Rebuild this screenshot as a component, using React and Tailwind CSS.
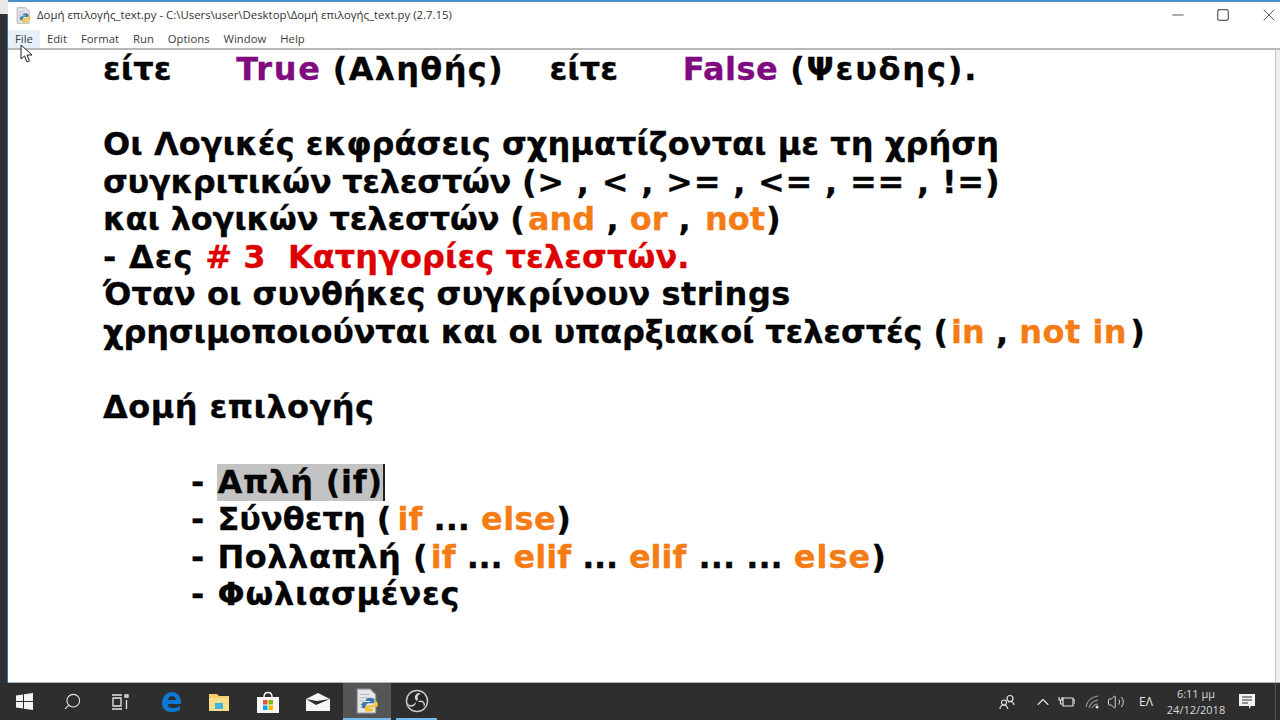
import React from 'react';
import { Search, ChevronUp, Volume2, X, Minus, Square } from 'lucide-react';

const O = ({ children, className = '' }) => <span className={'text-[#f57c14] ' + className}>{children}</span>;
const P = ({ children, className = '' }) => <span className={'text-[#800a80] ' + className}>{children}</span>;

function IdleIcon({ size = 18 }) {
  return (
    <svg width={size} height={size} viewBox="0 0 24 24">
      <path d="M3 1h12l5 5v17H3z" fill="#e6e8ea" stroke="#9a9ea3" strokeWidth="1" />
      <path d="M5 6h9M5 9h8M5 12h5M5 15h4M5 18h4" stroke="#b5b8bc" strokeWidth="1" />
      <path d="M8 14c0-2 1-3 3-3h4c1 0 1-1 1-2V8c0-1-1-2-4-2s-4 1-4 2v1h4v1H7c-2 0-3 1-3 3s1 3 3 3h1z" fill="#3a77b0" transform="translate(3 3)" />
      <path d="M16 10c2 0 3 1 3 3s-1 3-3 3h-5v1h4v1c0 1-1 2-4 2s-4-1-4-2v-1c0-2 1-3 3-3h4c1 0 2-1 2-2z" fill="#f2c53c" transform="translate(3 2)" />
    </svg>
  );
}

function MenuBar() {
  const items = ['File', 'Edit', 'Format', 'Run', 'Options', 'Window', 'Help'];
  return (
    <div className="h-[18px] flex items-center text-[11.300px] text-[#3c3c3c] shrink-0">
      {items.map((m, i) => (
        <span key={m} className={i === 0 ? 'h-full flex items-center px-[7px] bg-[#e5f0fa]' : 'h-full flex items-center px-[7px]'}>{m}</span>
      ))}
    </div>
  );
}

function Line({ children, indent }) {
  return <div className={indent ? 'h-[37.500px] whitespace-pre pl-[88px]' : 'h-[37.500px] whitespace-pre'}>{children}</div>;
}

function Editor() {
  return (
    <div className="flex-1 bg-white overflow-hidden pl-[95px] pt-[1px] font-['DejaVu_Sans'] font-bold text-[32px] leading-[37.500px] text-[#050505] [-webkit-text-stroke:0.3px]">
      <Line>
        είτε     <P className="ml-[9px] tracking-[1.700px] [-webkit-text-stroke:0.3px_#800a80]">True</P> <span className="tracking-[1.300px]">(Αληθής)</span>    <span className="ml-[1px]">είτε</span>     <P className="ml-[9px] tracking-[0.400px] [-webkit-text-stroke:0.3px_#800a80]">False</P> <span className="ml-[1px] tracking-[1.800px]">(Ψευδης).</span>
      </Line>
      <Line> </Line>
      <Line><span className="tracking-[0.030px]">Οι Λογικές εκφράσεις σχηματίζονται με τη χρήση</span></Line>
      <Line><span className="tracking-[-0.300px]">συγκριτικών τελεστών </span><span className="tracking-[0.780px]">(&gt; , &lt; , &gt;= , &lt;= , == , !=)</span></Line>
      <Line><span className="tracking-[-0.160px]">και λογικών τελεστών </span><span className="tracking-[3px]">(</span><O>and</O> , <O>or</O> , <O className="ml-[3px]">not</O><span className="ml-[1px]">)</span></Line>
      <Line><span className="tracking-[0.850px]">- Δες </span><span className="text-[#dc0000] tracking-[0.050px]"># 3  Κατηγορίες τελεστών.</span></Line>
      <Line><span className="tracking-[0.020px]">Όταν οι συνθήκες συγκρίνουν </span><span className="tracking-[0.500px]">strings</span></Line>
      <Line><span className="tracking-[-0.160px]">χρησιμοποιούνται και οι υπαρξιακοί τελεστές </span><span className="tracking-[3px]">(</span><O>in</O> , <O className="tracking-[0.500px]">not in</O><span className="ml-[3px]">)</span></Line>
      <Line> </Line>
      <Line><span className="tracking-[0.450px]">Δομή επιλογής</span></Line>
      <Line> </Line>
      <Line indent>- <span className="ml-[2px] inline-block h-[37px] leading-[37px] bg-[#c3c3c3] border-r-2 border-[#222] tracking-[0.800px]">Απλή (if)</span></Line>
      <Line indent>- <span className="ml-[2px]">Σύνθετη </span><span className="tracking-[3px]">(</span><O className="ml-[3px]">if</O> ... <O className="tracking-[0.400px]">else</O>)</Line>
      <Line indent>- <span className="ml-[2px] tracking-[0.550px]">Πολλαπλή </span><span className="tracking-[3px]">(</span><O>if</O> <span className="tracking-[-0.300px]">...</span> <O>elif</O> <span className="tracking-[-0.300px]">...</span> <O>elif</O> <span className="ml-[1px]">... ...</span> <O className="tracking-[1px]">else</O>)</Line>
      <Line indent>- <span className="ml-[2px] tracking-[0.750px]">Φωλιασμένες</span></Line>
    </div>
  );
}

function Taskbar() {
  return (
    <div className="h-[37px] bg-[#2e2e2e] flex items-center text-[#e4e4e4] shrink-0">
      <div className="w-[48px] flex justify-center">
        <svg width="17" height="17" viewBox="0 0 17 17" fill="#f4f4f4"><path d="M0 2.500 7 1.500V8H0zM8 1.300 17 0V8H8zM0 9h7v6.500L0 14.500zM8 9h9v8l-9-1.300z" /></svg>
      </div>
      <div className="w-[48px] flex justify-center"><Search size={19} className="-scale-x-100" strokeWidth={1.400} /></div>
      <div className="w-[48px] flex justify-center">
        <svg width="18" height="16" viewBox="0 0 18 16" fill="none" stroke="#e8e8e8" strokeWidth="1.300"><path d="M1 1h10M1 15h10M2 4h8v8H2zM14 1h3v2h-3zM15.500 6v9" /></svg>
      </div>
      <div className="w-[48px] ml-[4px] flex justify-center">
        <svg width="22" height="22" viewBox="0 0 22 22"><path d="M11 1C5 1 1 6 1 12c0 6 4 9 10 9 3 0 6-1 8-2v-4c-2 1-4 2-7 2-3 0-5-1-5-4h13v-2C20 5 16 1 11 1zM7 9c0-2 2-4 4-4s4 2 4 4z" fill="#0f78d4" /></svg>
      </div>
      <div className="w-[48px] -ml-[1px] flex justify-center">
        <svg width="22" height="20" viewBox="0 0 22 20"><path d="M1 2h8l2 2h10v15H1z" fill="#f3cf6d" /><path d="M1 6h20v13H1z" fill="#f8de8c" /><path d="M7 11h8v6H7z" fill="#3fb4dc" /></svg>
      </div>
      <div className="w-[48px] ml-[1px] flex justify-center">
        <svg width="24" height="24" viewBox="0 0 24 24"><path d="M8 7c0-6 8-6 8 0" fill="none" stroke="#f4f4f4" strokeWidth="1.500" /><path d="M1 7h22v16H1z" fill="#f6f6f6" /><path d="M7 10h4.500v4.500H7z" fill="#e4572e" /><path d="M12.500 10H17v4.500h-4.500z" fill="#7fba00" /><path d="M7 15.500h4.500V20H7z" fill="#00a4ef" /><path d="M12.500 15.500H17V20h-4.500z" fill="#ffb900" /></svg>
      </div>
      <div className="w-[48px] ml-[2px] flex justify-center">
        <svg width="24" height="18" viewBox="0 0 24 18"><path d="M0 6 12 0l12 6v12H0z" fill="#f6f6f6" /><path d="M0 6l10 6 14-6-13 2z" fill="#2e2e2e" /></svg>
      </div>
      <div className="w-[48px] h-full ml-[1px] bg-[#555] border-b-2 border-[#76b9ed] flex justify-center items-center">
        <IdleIcon size={26} />
      </div>
      <div className="w-[41px] h-full ml-[5px] border-b-2 border-[#76b9ed] flex justify-center items-center">
        <svg width="24" height="24" viewBox="0 0 24 24"><circle cx="12" cy="12" r="10.500" fill="#262626" stroke="#c8c8c8" strokeWidth="1.500" /><path d="M12 12c-3-2-3-6 1-8 1 0 2 0 3 1-3 0-4 3-3 5zM12.500 12.500c3-2 7-1 7.500 3-.2 1-.8 2-1.500 2 1-3-1-5-4-4.500zM11 13c0 3-3 6-7 4-.5-.5-1-1.500-1-2.500 2 2.500 5 2 7-.5z" fill="#d4d4d4" /></svg>
      </div>
      <div className="flex-1" />
      <svg width="16" height="16" viewBox="0 0 16 16" fill="none" stroke="#e4e4e4" strokeWidth="1.200" className="mr-[18px]"><circle cx="11" cy="4.500" r="3" /><circle cx="5" cy="8.500" r="2.500" /><path d="M1 15c0-3 2-4 4-4s3 1 4 4M9 8c3-1 6 0 6 3" /></svg>
      <ChevronUp size={20} strokeWidth={1.300} className="mr-[5px]" />
      <svg width="17" height="12" viewBox="0 0 17 12" fill="none" stroke="#e4e4e4" strokeWidth="1.200" className="mr-[10px]"><path d="M5 2h10v8H5zM15 4h2v4M1 1v3h3V1M2.500 4v4h3" /></svg>
      <svg width="14" height="14" viewBox="0 0 14 14" fill="none" stroke="#9a9a9a" strokeWidth="1.100" className="mr-[8px]"><path d="M1 12C2 6 6 2 13 1M4 13c1-4 4-7 9-8M7 13c1-2 3-4 6-4" /><circle cx="12" cy="12" r="1.500" fill="#e4e4e4" stroke="none" /></svg>
      <Volume2 size={18} strokeWidth={1.200} className="mr-[14px]" />
      <span className="text-[12px] mr-[12px] font-['Open_Sans']">ΕΛ</span>
      <div className="w-[62px] text-center text-[11px] leading-[16px] font-['Open_Sans'] text-[#d8d8d8]">
        <div>6:11 μμ</div>
        <div>24/12/2018</div>
      </div>
      <svg width="17" height="16" viewBox="0 0 17 16" className="ml-[12px] mr-[19px]"><path d="M0 0h16v12h-4l-2 3v-3H0z" fill="#f2f2f2" /><path d="M3 3h10M3 6h10M3 9h6" stroke="#2e2e2e" /></svg>
      <div className="w-[5px] h-full border-l border-[#555]" />
    </div>
  );
}

export default function App() {
  return (
    <div className="relative w-[1280px] h-[720px] flex flex-col overflow-hidden bg-white font-['Open_Sans']">
      <div className="flex-1 flex min-h-0">
        {/* Desktop behind the window */}
        <div className="w-[8px] flex flex-col shrink-0 bg-[#2e3136]">
          <div className="h-[14px] bg-[#e8e8e8]" />
          <div className="flex-1 border-r border-[#3f6f9f]" />
        </div>
        <div className="flex-1 flex flex-col min-w-0 border-b border-[#a9b4c0]">
          <div className="h-[2px] bg-[#4b90c4] shrink-0" />
          <div className="h-[28px] pb-[2px] flex items-center shrink-0 text-[11.400px] text-[#333]">
            <div className="ml-[7px] mr-[5px]"><IdleIcon size={17} /></div>
            <span>Δομή επιλογής_text.py - C:\Users\user\Desktop\Δομή επιλογής_text.py (2.7.15)</span>
            <div className="flex-1" />
            <Minus size={18} strokeWidth={1.100} className="mr-[29px]" />
            <Square size={14} strokeWidth={1.700} className="mr-[29px]" />
            <X size={20} strokeWidth={1} className="mr-[1px]" />
          </div>
          <MenuBar />
          <div className="flex-1 flex min-h-0 border-t-2 border-[#b8b8b8]">
            <Editor />
            <div className="w-[5px] bg-[#f0f0f0] border-l border-[#c8c8c8] shrink-0" />
          </div>
        </div>
      </div>
      <Taskbar />
      {/* Mouse pointer */}
      <svg width="14" height="20" viewBox="0 0 14 20" className="absolute left-[20px] top-[44px]">
        <path d="M1 1v14l3.500-3 2.500 6 2.500-1-2.500-6h5z" fill="#fff" stroke="#222" strokeWidth="1" />
      </svg>
    </div>
  );
}
